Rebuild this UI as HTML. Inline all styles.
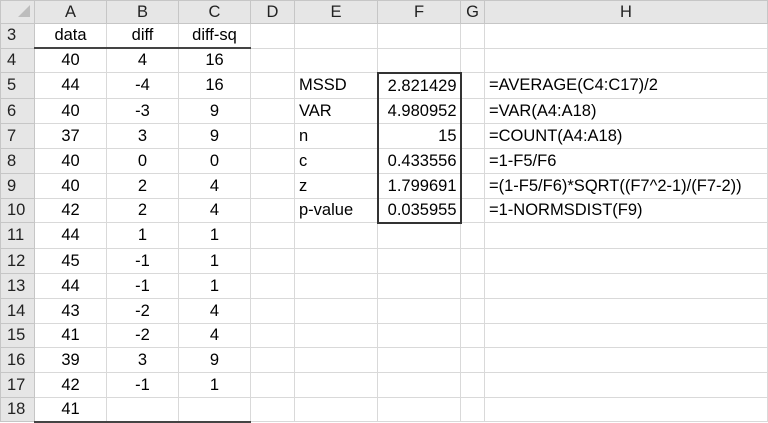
<!DOCTYPE html>
<html><head><style>
body{margin:0;background:#fff;width:768px;height:423px;overflow:hidden;font-family:"Liberation Sans",sans-serif;font-size:16.5px;color:#000}
table{border-collapse:collapse;table-layout:fixed;position:absolute;left:0;top:0}
td{border:1px solid #d9d9d9;padding:0 4px;white-space:nowrap;overflow:visible;height:24px;line-height:24px}
tr.h td{background:#e6e6e6;height:22px;line-height:22px;text-align:center;border-color:#c6c6c6;color:#222}
td.r{background:#e6e6e6;text-align:left;padding-left:6px;border-color:#c6c6c6;color:#222}
.c{text-align:center}.rt{text-align:right;padding-right:3px}
tr.s td{height:23px;line-height:23px}
.bb{border-bottom:2px solid #444}
.bx{border-left:2px solid #333;border-right:2px solid #333}
.bt{border-top:2px solid #333}.bbo{border-bottom:2px solid #333}
</style></head><body>
<table>
<colgroup><col style="width:34px"><col style="width:72px"><col style="width:72px"><col style="width:72px"><col style="width:44px"><col style="width:83px"><col style="width:83px"><col style="width:24px"><col style="width:283px"></colgroup>
<tr class="h"><td style="background:#e6e6e6"><svg width="20" height="16" style="position:relative;top:2px;left:4px"><polygon points="18,2 18,14 6,14" fill="#bdbdbd"/></svg></td><td>A</td><td>B</td><td>C</td><td>D</td><td>E</td><td>F</td><td>G</td><td>H</td></tr>
<tr class="s"><td class="r">3</td><td class="c bb">data</td><td class="c bb">diff</td><td class="c bb">diff-sq</td><td></td><td></td><td></td><td></td><td></td></tr>
<tr class="s"><td class="r">4</td><td class="c">40</td><td class="c">4</td><td class="c">16</td><td></td><td></td><td class="bbo"></td><td></td><td></td></tr>
<tr><td class="r">5</td><td class="c">44</td><td class="c">-4</td><td class="c">16</td><td></td><td>MSSD</td><td class="rt bx bt">2.821429</td><td></td><td>=AVERAGE(C4:C17)/2</td></tr>
<tr><td class="r">6</td><td class="c">40</td><td class="c">-3</td><td class="c">9</td><td></td><td>VAR</td><td class="rt bx">4.980952</td><td></td><td>=VAR(A4:A18)</td></tr>
<tr><td class="r">7</td><td class="c">37</td><td class="c">3</td><td class="c">9</td><td></td><td>n</td><td class="rt bx">15</td><td></td><td>=COUNT(A4:A18)</td></tr>
<tr><td class="r">8</td><td class="c">40</td><td class="c">0</td><td class="c">0</td><td></td><td>c</td><td class="rt bx">0.433556</td><td></td><td>=1-F5/F6</td></tr>
<tr><td class="r">9</td><td class="c">40</td><td class="c">2</td><td class="c">4</td><td></td><td>z</td><td class="rt bx">1.799691</td><td></td><td>=(1-F5/F6)*SQRT((F7^2-1)/(F7-2))</td></tr>
<tr class="s"><td class="r">10</td><td class="c">42</td><td class="c">2</td><td class="c">4</td><td></td><td>p-value</td><td class="rt bx bbo">0.035955</td><td></td><td>=1-NORMSDIST(F9)</td></tr>
<tr><td class="r">11</td><td class="c">44</td><td class="c">1</td><td class="c">1</td><td></td><td></td><td></td><td></td><td></td></tr>
<tr><td class="r">12</td><td class="c">45</td><td class="c">-1</td><td class="c">1</td><td></td><td></td><td></td><td></td><td></td></tr>
<tr><td class="r">13</td><td class="c">44</td><td class="c">-1</td><td class="c">1</td><td></td><td></td><td></td><td></td><td></td></tr>
<tr><td class="r">14</td><td class="c">43</td><td class="c">-2</td><td class="c">4</td><td></td><td></td><td></td><td></td><td></td></tr>
<tr class="s"><td class="r">15</td><td class="c">41</td><td class="c">-2</td><td class="c">4</td><td></td><td></td><td></td><td></td><td></td></tr>
<tr><td class="r">16</td><td class="c">39</td><td class="c">3</td><td class="c">9</td><td></td><td></td><td></td><td></td><td></td></tr>
<tr><td class="r">17</td><td class="c">42</td><td class="c">-1</td><td class="c">1</td><td></td><td></td><td></td><td></td><td></td></tr>
<tr class="s"><td class="r">18</td><td class="c bb">41</td><td class="bb"></td><td class="bb"></td><td></td><td></td><td></td><td></td><td></td></tr>
</table>
</body></html>
